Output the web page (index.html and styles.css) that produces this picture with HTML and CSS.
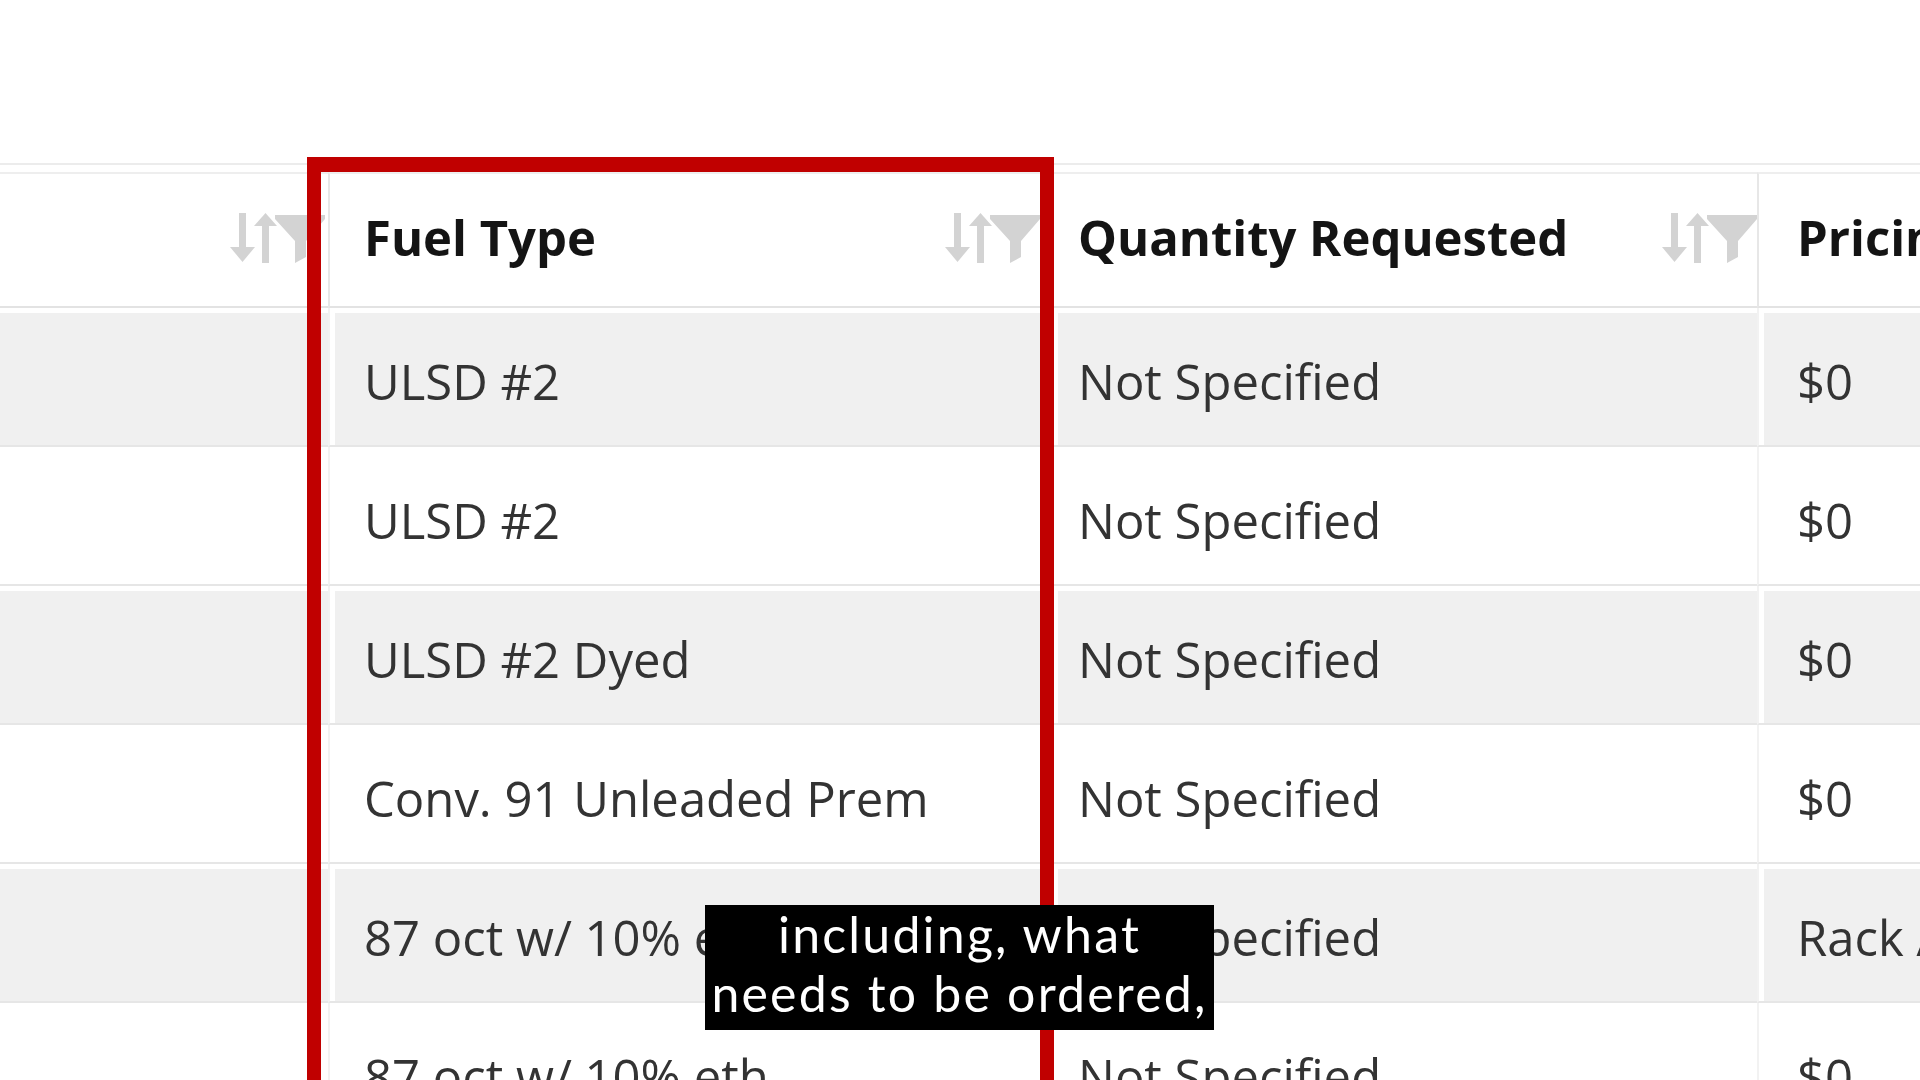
FILE: index.html
```html
<!DOCTYPE html>
<html lang="en">
<head>
<meta charset="utf-8">
<title>Fuel Orders</title>
<link rel="stylesheet" href="styles.css">
</head>
<body>
<div class="frame">
  <div class="grid-wrap">
    <table class="orders">
      <colgroup>
        <col class="w1"><col class="w2"><col class="w3"><col class="w4">
      </colgroup>
      <thead>
        <tr>
          <th class="c1"><div class="th-in"><span class="label"></span>
            <svg class="tools" viewBox="0 0 95 50" width="95" height="50"><rect x="9" y="0" width="7" height="36"/><polygon points="0,34 25,34 12.5,49"/><polygon points="35.5,0 47,13 24,13"/><rect x="32" y="12" width="7" height="38"/><polygon points="45,2 95,2 95,6 76,28 76,44 65,50 65,28 45,6"/></svg>
          </div></th>
          <th class="c2"><div class="th-in"><span class="label">Fuel Type</span>
            <svg class="tools" viewBox="0 0 95 50" width="95" height="50"><rect x="9" y="0" width="7" height="36"/><polygon points="0,34 25,34 12.5,49"/><polygon points="35.5,0 47,13 24,13"/><rect x="32" y="12" width="7" height="38"/><polygon points="45,2 95,2 95,6 76,28 76,44 65,50 65,28 45,6"/></svg>
          </div></th>
          <th class="c3"><div class="th-in"><span class="label">Quantity Requested</span>
            <svg class="tools" viewBox="0 0 95 50" width="95" height="50"><rect x="9" y="0" width="7" height="36"/><polygon points="0,34 25,34 12.5,49"/><polygon points="35.5,0 47,13 24,13"/><rect x="32" y="12" width="7" height="38"/><polygon points="45,2 95,2 95,6 76,28 76,44 65,50 65,28 45,6"/></svg>
          </div></th>
          <th class="c4"><div class="th-in"><span class="label">Pricing</span>
            <svg class="tools" viewBox="0 0 95 50" width="95" height="50"><rect x="9" y="0" width="7" height="36"/><polygon points="0,34 25,34 12.5,49"/><polygon points="35.5,0 47,13 24,13"/><rect x="32" y="12" width="7" height="38"/><polygon points="45,2 95,2 95,6 76,28 76,44 65,50 65,28 45,6"/></svg>
          </div></th>
        </tr>
      </thead>
      <tbody>
        <tr class="alt"><td class="c1"><div class="td-in"></div></td><td class="c2"><div class="td-in">ULSD #2</div></td><td class="c3"><div class="td-in">Not Specified</div></td><td class="c4"><div class="td-in">$0</div></td></tr>
        <tr><td class="c1"><div class="td-in"></div></td><td class="c2"><div class="td-in">ULSD #2</div></td><td class="c3"><div class="td-in">Not Specified</div></td><td class="c4"><div class="td-in">$0</div></td></tr>
        <tr class="alt"><td class="c1"><div class="td-in"></div></td><td class="c2"><div class="td-in">ULSD #2 Dyed</div></td><td class="c3"><div class="td-in">Not Specified</div></td><td class="c4"><div class="td-in">$0</div></td></tr>
        <tr><td class="c1"><div class="td-in"></div></td><td class="c2"><div class="td-in">Conv. 91 Unleaded Prem</div></td><td class="c3"><div class="td-in">Not Specified</div></td><td class="c4"><div class="td-in">$0</div></td></tr>
        <tr class="alt"><td class="c1"><div class="td-in"></div></td><td class="c2"><div class="td-in">87 oct w/ 10% eth</div></td><td class="c3"><div class="td-in">Not Specified</div></td><td class="c4"><div class="td-in">Rack Average</div></td></tr>
        <tr><td class="c1"><div class="td-in"></div></td><td class="c2"><div class="td-in">87 oct w/ 10% eth</div></td><td class="c3"><div class="td-in">Not Specified</div></td><td class="c4"><div class="td-in">$0</div></td></tr>
      </tbody>
    </table>
  </div>
  <div class="highlight"></div>
  <div class="caption">including, what<br>needs to be ordered,</div>
</div>
</body>
</html>
```
FILE: styles.css
```css
html, body {
  margin: 0;
  padding: 0;
  background: #ffffff;
  overflow: hidden;
}

.frame {
  position: relative;
  width: 1920px;
  height: 1080px;
  overflow: hidden;
  padding-top: 163px;
  box-sizing: border-box;
  background: #ffffff;
}

.grid-wrap {
  width: 2300px;
  border-top: 2px solid #ececec;
  padding-top: 7px;
}

.orders {
  width: 2300px;
  table-layout: fixed;
  border-collapse: separate;
  border-spacing: 0;
  font-family: "Open Sans", "Liberation Sans", sans-serif;
}

.w1 { width: 328px; }
.w2 { width: 723px; }
.w3 { width: 706px; }
.w4 { width: 543px; }

.orders th {
  padding: 0;
  text-align: left;
  background: #ffffff;
  border-top: 2px solid #eeeeee;
  border-bottom: 2px solid #e3e3e3;
}

.orders th.c2, .orders th.c3, .orders th.c4 {
  border-left: 2px solid #e7e7e7;
  box-shadow: inset 5px 0 0 #ffffff;
}

.th-in {
  height: 132px;
  box-sizing: border-box;
  padding-bottom: 6px;
  display: flex;
  align-items: center;
  justify-content: space-between;
}

.c1 .th-in { padding-right: 3px; }
.c2 .th-in { padding-left: 34px; padding-right: 11px; }
.c3 .th-in { padding-left: 25px; }
.c4 .th-in { padding-left: 38px; }

.label {
  font-size: 49px;
  font-weight: 700;
  color: #141414;
  white-space: nowrap;
}

.tools {
  flex: none;
  fill: #d3d3d3;
  margin-top: 2px;
}

.orders td {
  padding: 0;
  background: #ffffff;
  border-bottom: 2px solid #e6e6e6;
  box-shadow: inset 0 5px 0 #ffffff;
}

.orders tr.alt td {
  background: #f0f0f0;
}

.orders td.c2, .orders td.c3, .orders td.c4 {
  border-left: 2px solid #f2f2f2;
  box-shadow: inset 5px 5px 0 #ffffff;
}

.td-in {
  height: 137px;
  box-sizing: border-box;
  padding-top: 8px;
  display: flex;
  align-items: center;
  font-size: 49px;
  color: #333333;
  white-space: nowrap;
  overflow: hidden;
}

.c2 .td-in { padding-left: 34px; }
.c3 .td-in { padding-left: 25px; }
.c4 .td-in { padding-left: 38px; }

.highlight {
  position: absolute;
  left: 307px;
  top: 157px;
  width: 747px;
  height: 1000px;
  box-sizing: border-box;
  border: 14px solid #c00000;
  border-top-width: 15px;
  pointer-events: none;
}

.caption {
  position: absolute;
  left: 705px;
  top: 905px;
  width: 509px;
  height: 125px;
  box-sizing: border-box;
  background: #000000;
  color: #ffffff;
  font-family: Lato, "Open Sans", sans-serif;
  font-size: 50px;
  letter-spacing: 2.2px;
  line-height: 59px;
  text-align: center;
  white-space: nowrap;
}
```
